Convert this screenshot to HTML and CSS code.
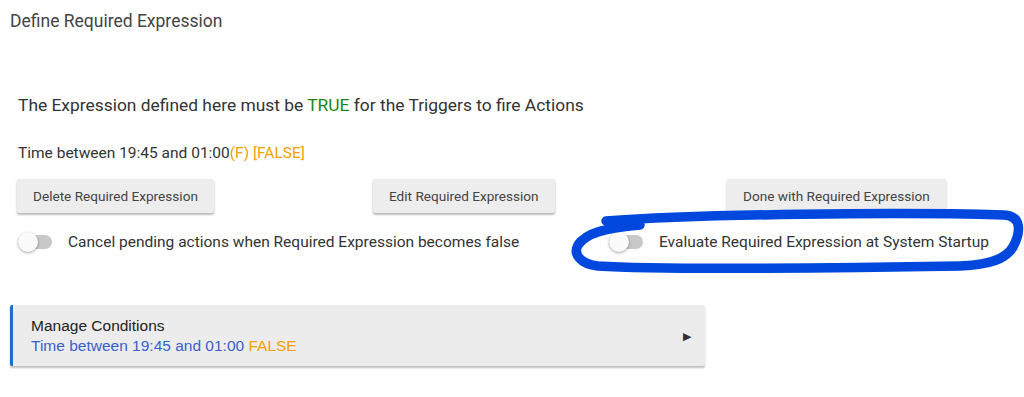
FILE: index.html
```html
<!DOCTYPE html>
<html>
<head>
<meta charset="utf-8">
<link rel="stylesheet" href="styles.css">
</head>
<body>
<div class="page">
  <div class="title">Define Required Expression</div>
  <div class="content">
    <p class="lead">The Expression defined here must be <span class="green">TRUE</span> for the Triggers to fire Actions</p>
    <p class="expr">Time between 19:45 and 01:00<span class="orange">(F) [FALSE]</span></p>
    <div class="buttons">
      <div class="cell"><button class="btn">Delete Required Expression</button></div>
      <div class="cell"><button class="btn">Edit Required Expression</button></div>
      <div class="cell"><button class="btn">Done with Required Expression</button></div>
    </div>
    <div class="toggles">
      <label class="toggle"><span class="switch"><span class="knob"></span></span><span class="tlabel">Cancel pending actions when Required Expression becomes false</span></label>
      <label class="toggle"><span class="switch"><span class="knob"></span></span><span class="tlabel">Evaluate Required Expression at System Startup</span></label>
    </div>
  </div>
  <div class="card">
    <div class="card-text">
      <div class="card-title">Manage Conditions</div>
      <div class="card-sub">Time between 19:45 and 01:00 <span class="orange">FALSE</span></div>
    </div>
    <span class="arrow">&#9654;</span>
  </div>
  <svg class="annot" width="1024" height="397" viewBox="0 0 1024 397">
    <path d="M 606 221 C 700 214, 900 212, 1004 215 C 1022 216, 1021 232, 1013 247 C 1006 259, 990 265, 960 266 C 850 268, 660 270, 598 266 C 580 264, 573 254, 578 245 C 586 233, 605 228, 640 225" fill="none" stroke="#0047de" stroke-width="9.5" stroke-linecap="round" stroke-linejoin="round"/>
  </svg>
</div>
</body>
</html>
```

FILE: styles.css
```css
html, body {
  margin: 0;
  padding: 0;
  background: #fff;
}
body {
  font-family: Roboto, "Liberation Sans", Arial, sans-serif;
  color: #444;
  overflow: hidden;
}
.page {
  position: relative;
  width: 1024px;
  height: 397px;
}
.title {
  padding: 10px 0 0 10px;
  font-size: 17.5px;
  line-height: 22px;
  color: #444;
}
.content {
  padding: 0 0 0 17px;
}
.lead {
  margin: 62px 0 0 1px;
  font-size: 17.4px;
  line-height: 22px;
  color: #333;
}
.green { color: #148a14; }
.orange { color: #f7a000; }
.expr {
  margin: 27px 0 0 1px;
  font-size: 15.5px;
  line-height: 20px;
  color: #333;
}
.buttons {
  display: grid;
  grid-template-columns: 356px 354px 300px;
  margin-top: 16px;
}
.btn {
  font-family: Roboto, "Liberation Sans", Arial, sans-serif;
  font-size: 13.6px;
  color: #444;
  background: #ededed;
  border: none;
  border-radius: 2px;
  height: 34px;
  padding: 0 16px;
  box-shadow: 0 2px 2px rgba(0,0,0,0.2), 0 1px 3px rgba(0,0,0,0.12);
}
.toggles {
  display: grid;
  grid-template-columns: 591px 400px;
  margin-top: 19px;
  height: 20px;
}
.toggle {
  display: flex;
  align-items: center;
  gap: 16px;
  padding-left: 1px;
}
.switch {
  position: relative;
  width: 34px;
  height: 14px;
  border-radius: 7px;
  background: #c8c8c8;
  flex: none;
}
.knob {
  position: absolute;
  left: 0;
  top: -3px;
  width: 20px;
  height: 20px;
  border-radius: 50%;
  background: #fafafa;
  box-shadow: 0 1px 3px rgba(0,0,0,0.35);
}
.tlabel {
  font-size: 15.5px;
  color: #333;
}
.card {
  margin: 53px 0 0 10px;
  width: 695px;
  height: 61px;
  background: #ececec;
  border-left: 3px solid #1a6fd0;
  box-shadow: 0 2px 2px rgba(0,0,0,0.25);
  display: flex;
  align-items: center;
  justify-content: space-between;
  box-sizing: border-box;
  border-radius: 2px;
}
.card-text {
  padding-left: 18px;
  font-family: "Liberation Sans", Arial, sans-serif;
  font-size: 15.5px;
  line-height: 20px;
}
.card-title { color: #222; }
.card-sub { color: #3a5fcd; }
.arrow {
  font-size: 11px;
  color: #333;
  margin-right: 14px;
  margin-top: 2px;
}
.annot {
  position: absolute;
  left: 0;
  top: 0;
  pointer-events: none;
}
```
